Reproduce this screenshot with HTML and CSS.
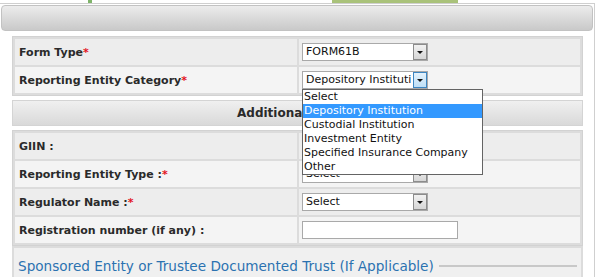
FILE: index.html
```html
<!DOCTYPE html>
<html lang="en">
<head>
<meta charset="UTF-8" />
<title>Form 61B</title>
<link rel="stylesheet" href="styles.css">
</head>
<body>
<div class="topline">
  <span class="pic pic-a"></span>
  <span class="pic pic-b"></span>
</div>
<div class="frame">
  <div class="bar"></div>
  <div class="content">
    <table class="grid">
      <tr>
        <th>Form Type<span class="req">*</span></th>
        <td><div class="sel"><span class="sel-text">FORM61B</span><span class="sel-btn"></span></div></td>
      </tr>
      <tr class="alt">
        <th>Reporting Entity Category<span class="req">*</span></th>
        <td>
          <div class="sel sel-open">
            <span class="sel-text">Depository Instituti</span><span class="sel-btn"></span>
            <ul class="list">
              <li>Select</li>
              <li class="active">Depository Institution</li>
              <li>Custodial Institution</li>
              <li>Investment Entity</li>
              <li>Specified Insurance Company</li>
              <li>Other</li>
            </ul>
          </div>
        </td>
      </tr>
    </table>

    <div class="section">Additional Details</div>

    <table class="grid">
      <tr>
        <th>GIIN :</th>
        <td><div class="txt"></div></td>
      </tr>
      <tr class="alt">
        <th>Reporting Entity Type :<span class="req">*</span></th>
        <td><div class="sel"><span class="sel-text">Select</span><span class="sel-btn"></span></div></td>
      </tr>
      <tr>
        <th>Regulator Name :<span class="req">*</span></th>
        <td><div class="sel"><span class="sel-text">Select</span><span class="sel-btn"></span></div></td>
      </tr>
      <tr class="alt">
        <th>Registration number (if any) :</th>
        <td><div class="txt"></div></td>
      </tr>
    </table>

    <div class="group">
      <span class="group-title">Sponsored Entity or Trustee Documented Trust (If Applicable)</span>
      <span class="group-line"></span>
    </div>
  </div>
</div>
</body>
</html>
```

FILE: styles.css
```css
body {
margin: 0;
background: #fff;
font-family: "DejaVu Sans", Verdana, sans-serif;
font-size: 11px;
color: #222;
overflow: hidden;
}

.topline {
height: 3px;
display: flex;
}

.pic {
height: 3px;
background: #a9c27a;
}

.pic-a {
width: 4px;
margin-left: 88px;
background: #7fb46a;
}

.pic-b {
width: 126px;
margin-left: 240px;
}

.frame {
width: 596px;
margin-left: -2px;
border-top: 1px solid #cfcfcf;
border-right: 1px solid #cfcfcf;
padding-top: 1px;
height: 300px;
}

.bar {
height: 24px;
margin-left: 3px;
width: 590px;
border: 1px solid #c2c2c2;
border-radius: 4px;
background: linear-gradient(#ececec, #c9c9c9);
}

.content {
padding: 5px 0 0 14px;
width: 571px;
}

.grid {
width: 571px;
border-collapse: separate;
border-spacing: 2px;
border: 1px solid #d2d2d2;
background: #dcdcdc;
}

.grid th,
.grid td {
height: 26px;
padding: 0;
background: #ededed;
vertical-align: middle;
}

.grid tr.alt th,
.grid tr.alt td {
background: #f4f4f4;
}

.grid th {
width: 278px;
padding-left: 4px;
text-align: left;
font-weight: bold;
color: #2a2a2a;
}

.grid td {
padding-left: 3px;
}

.req {
color: #e3141e;
}

.sel {
position: relative;
width: 124px;
height: 16px;
border: 1px solid #a9a9a9;
background: #fff;
display: flex;
}

.sel-text {
flex: 1;
padding-left: 3px;
line-height: 16px;
font-size: 11px;
color: #111;
white-space: nowrap;
overflow: hidden;
}

.sel-btn {
width: 12px;
height: 14px;
margin: 0;
border: 1px solid #8c8c8c;
background: linear-gradient(#f2f2f2, #d6d6d6);
display: flex;
align-items: center;
justify-content: center;
}

.sel-btn::after {
content: "";
border-left: 3px solid transparent;
border-right: 3px solid transparent;
border-top: 3px solid #111;
}

.sel-open .sel-btn {
border-color: #3d86c2;
background: linear-gradient(#e4f2fc, #bedff6);
}

.list {
position: absolute;
z-index: 5;
top: 17px;
left: -1px;
width: 179px;
margin: 0;
padding: 0;
list-style: none;
background: #fff;
border: 1px solid #646464;
}

.list li {
height: 14px;
line-height: 14px;
padding-left: 1px;
font-size: 11px;
color: #111;
white-space: nowrap;
}

.list li.active {
background: #3399ff;
color: #fff;
}

.txt {
width: 154px;
height: 16px;
border: 1px solid #a9a9a9;
background: #fff;
}

.section {
margin: 4px 0;
height: 24px;
line-height: 24px;
border: 1px solid #d4d4d4;
background: linear-gradient(#f0f0f0, #d9d9d9);
text-align: center;
font-weight: bold;
font-size: 12px;
color: #2a2a2a;
}

.group {
height: 36px;
border: 2px solid #dcdcdc;
border-bottom: none;
background: #f0f0f0;
display: flex;
align-items: center;
padding: 0 4px;
}

.group-title {
font-size: 13.6px;
color: #2b72b0;
white-space: nowrap;
padding-right: 5px;
}

.group-line {
flex: 1;
height: 2px;
background: #c8c8c8;
}
```
